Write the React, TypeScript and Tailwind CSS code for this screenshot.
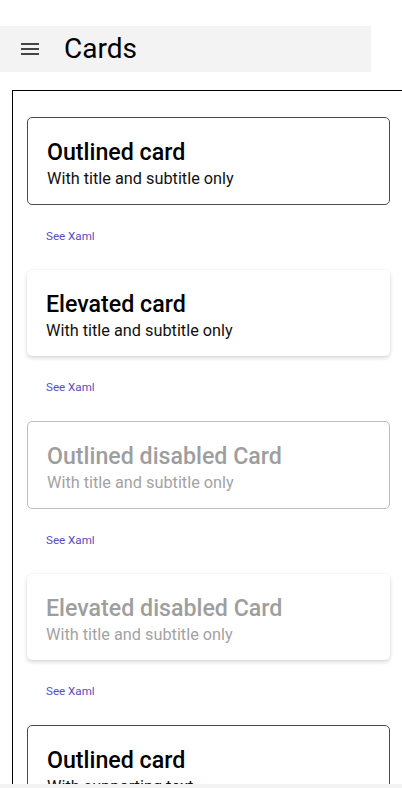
import React from "react";

const font = { fontFamily: "Roboto, 'Noto Sans', sans-serif" };

type CardProps = {
  title: string;
  subtitle: string;
  variant: "outlined" | "elevated";
  disabled?: boolean;
};

const Card: React.FC<CardProps> = ({ title, subtitle, variant, disabled }) => {
  const box =
    variant === "outlined"
      ? disabled
        ? "border border-[#bdbdbd] pt-[20px] pb-[12px]"
        : "border border-[#4a4a4a] pt-[20px] pb-[12px]"
      : "pt-[20px] pb-[12px] shadow-[0_2px_4px_rgba(0,0,0,0.16),0_0_2px_rgba(0,0,0,0.06)]";
  const titleColor = disabled ? "text-[#9e9e9e]" : "text-black";
  const subColor = disabled ? "text-[#a3a3a3]" : "text-[#111]";
  return (
    <div className={`w-[363px] rounded-[5px] bg-white px-[19px] ${box}`}>
      <div className={`text-[23.2px] leading-[28px] font-medium ${titleColor}`}>
        {title}
      </div>
      <div className={`text-[16.3px] leading-[26px] ${subColor}`}>{subtitle}</div>
    </div>
  );
};

const SeeXaml = () => (
  <div className="mt-[23px] mb-[26px] ml-[19px] text-[11.6px] leading-[16px] text-[#5b4bc4]">
    See Xaml
  </div>
);

const MenuIcon = () => (
  <svg width="24" height="24" viewBox="0 0 24 24" fill="#444">
    <rect x="3" y="6" width="18" height="2" />
    <rect x="3" y="11" width="18" height="2" />
    <rect x="3" y="16" width="18" height="2" />
  </svg>
);

export default function App() {
  return (
    <div className="w-[402px] h-[788px] bg-white overflow-hidden flex flex-col" style={font}>
      <div className="h-[26px] shrink-0" />
      <div className="h-[46px] w-[371px] shrink-0 bg-[#f3f3f3] flex items-center">
        <div className="ml-[18px]">
          <MenuIcon />
        </div>
        <div className="ml-[22px] text-[28px] leading-[32px] text-black">Cards</div>
      </div>
      <div className="h-[18px] shrink-0" />
      <div className="ml-[12px] h-[694px] shrink-0 border-l border-t border-black overflow-hidden pl-[14px] pt-[26px]">
        <Card variant="outlined" title="Outlined card" subtitle="With title and subtitle only" />
        <SeeXaml />
        <Card variant="elevated" title="Elevated card" subtitle="With title and subtitle only" />
        <SeeXaml />
        <Card
          variant="outlined"
          disabled
          title="Outlined disabled Card"
          subtitle="With title and subtitle only"
        />
        <SeeXaml />
        <Card
          variant="elevated"
          disabled
          title="Elevated disabled Card"
          subtitle="With title and subtitle only"
        />
        <SeeXaml />
        <Card variant="outlined" title="Outlined card" subtitle="With supporting text" />
      </div>
      <div className="flex-1 bg-[#f3f3f3]" />
    </div>
  );
}
